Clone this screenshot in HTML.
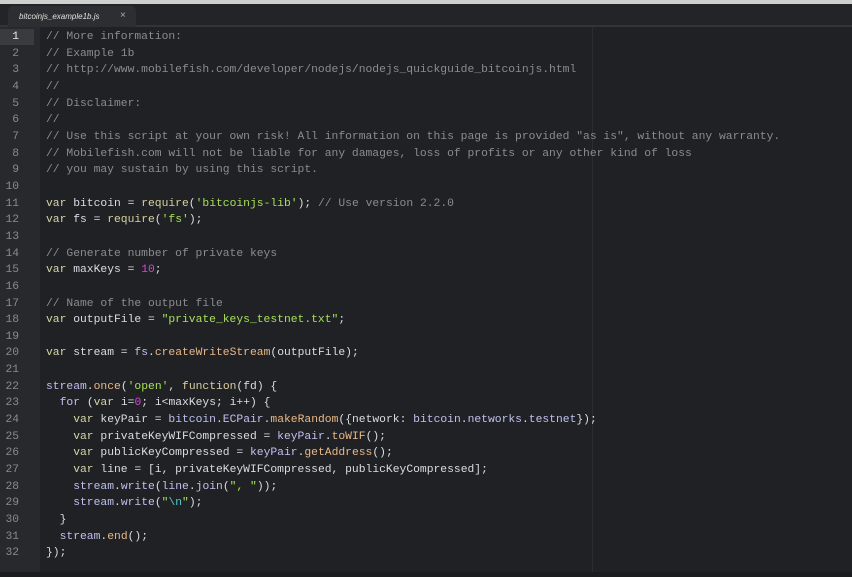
<!DOCTYPE html>
<html><head><style>
body{margin:0;width:852px;height:577px;overflow:hidden;background:#202124;position:relative;font-family:"Liberation Mono",monospace}
.top{position:absolute;left:0;top:0;width:852px;height:4px;background:#cfcfcf}
.tabbar{position:absolute;left:0;top:4px;width:852px;height:21px;background:#232427;border-bottom:2px solid #333437}
.tab{position:absolute;left:8px;top:6px;width:128px;height:21px;background:#2d2e31;border-radius:5px 5px 0 0;font:italic 8px "Liberation Sans",sans-serif;color:#e0e0e0}
.tab span{position:absolute;left:11px;top:6px}
.tab b{position:absolute;left:112px;top:4px;font:normal 10px "Liberation Sans",sans-serif;color:#aaa}
.gutter{position:absolute;left:0;top:27px;width:40px;height:545px;background:#28292c}
.hl{position:absolute;left:0;top:29px;width:34px;height:16px;background:#3a3b3e}
.ruler{position:absolute;left:592px;top:27px;width:1px;height:545px;background:#2c2d30}
.bottom{position:absolute;left:0;top:572px;width:852px;height:5px;background:#1b1c1e}
.ln{position:absolute;left:0;width:19px;text-align:right;font-size:11.3px;color:#8a8b8e}
.code{position:absolute;left:46px;white-space:pre;font-size:11.33px;color:#dcdce4}
.c{color:#8b8c8f}.k{color:#d6d6a8}.s{color:#a6e05a}.n{color:#e040e0}.f{color:#e8b888}.v{color:#bfc0ee}.q{color:#d8d0a0}.e{color:#5cc8c8}
</style></head><body>
<div class="top"></div>
<div class="tabbar"></div>
<div class="tab"><span>bitcoinjs_example1b.js</span><b>×</b></div>
<div class="gutter"></div>
<div class="hl"></div>
<div class="ruler"></div>
<div class="bottom"></div>
<div id="g"></div>
<div class="code" style="top:29px;line-height:16.65px"><span class="c">// More information:
// Example 1b
// http://www.mobilefish.com/developer/nodejs/nodejs_quickguide_bitcoinjs.html
//
// Disclaimer:
//
// Use this script at your own risk! All information on this page is provided "as is", without any warranty.
// Mobilefish.com will not be liable for any damages, loss of profits or any other kind of loss
// you may sustain by using this script.</span>

<span class="k">var</span> bitcoin = <span class="q">require</span>(<span class="s">'bitcoinjs-lib'</span>); <span class="c">// Use version 2.2.0</span>
<span class="k">var</span> fs = <span class="q">require</span>(<span class="s">'fs'</span>);

<span class="c">// Generate number of private keys</span>
<span class="k">var</span> maxKeys = <span class="n">10</span>;

<span class="c">// Name of the output file</span>
<span class="k">var</span> outputFile = <span class="s">"private_keys_testnet.txt"</span>;

<span class="k">var</span> stream = <span class="v">fs</span>.<span class="f">createWriteStream</span>(outputFile);

<span class="v">stream</span>.<span class="f">once</span>(<span class="s">'open'</span>, <span class="q">function</span>(fd) {
  <span class="v">for</span> (<span class="k">var</span> i=<span class="n">0</span>; i&lt;maxKeys; i++) {
    <span class="k">var</span> keyPair = <span class="v">bitcoin</span>.<span class="v">ECPair</span>.<span class="f">makeRandom</span>({network: <span class="v">bitcoin</span>.<span class="v">networks</span>.<span class="v">testnet</span>});
    <span class="k">var</span> privateKeyWIFCompressed = <span class="v">keyPair</span>.<span class="f">toWIF</span>();
    <span class="k">var</span> publicKeyCompressed = <span class="v">keyPair</span>.<span class="f">getAddress</span>();
    <span class="k">var</span> line = [i, privateKeyWIFCompressed, publicKeyCompressed];
    <span class="v">stream</span>.<span class="v">write</span>(<span class="v">line</span>.<span class="v">join</span>(<span class="s">", "</span>));
    <span class="v">stream</span>.<span class="v">write</span>(<span class="s">"<span class="e">\n</span>"</span>);
  }
  <span class="v">stream</span>.<span class="f">end</span>();
});</div>
<div class="ln" style="top:29px;line-height:16.65px;white-space:pre"><span style="color:#e8e8e8">1</span>
2
3
4
5
6
7
8
9
10
11
12
13
14
15
16
17
18
19
20
21
22
23
24
25
26
27
28
29
30
31
32</div>
</body></html>
